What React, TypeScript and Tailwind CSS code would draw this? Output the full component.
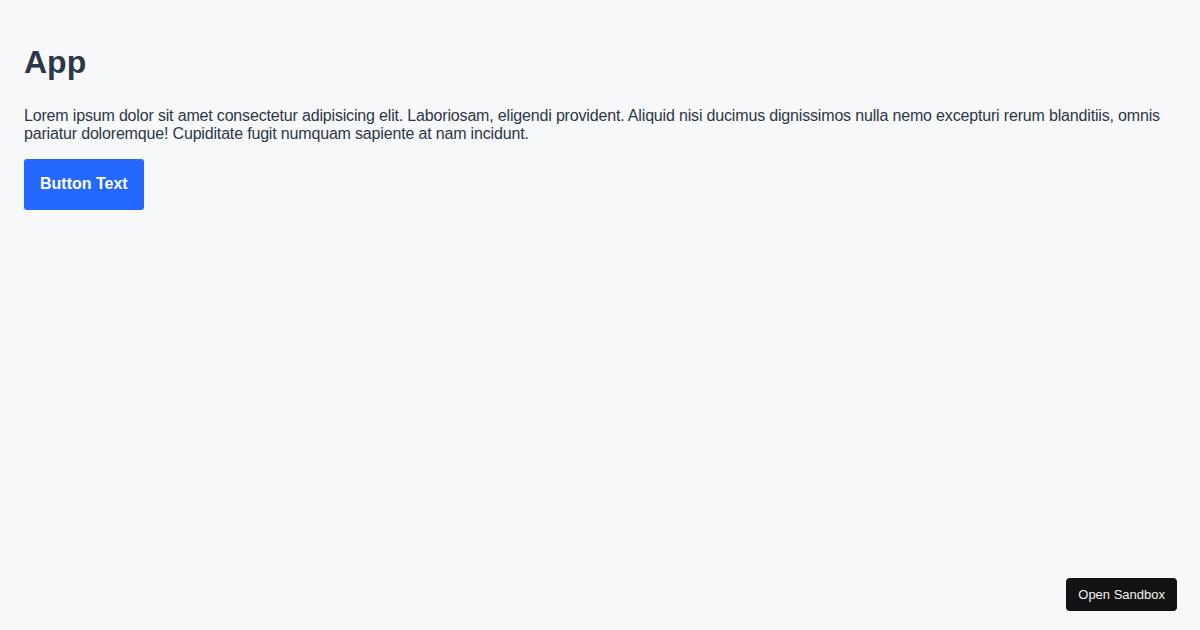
export default function App() {
  return (
    <div className="relative min-h-[630px] bg-[#f7f8fa] font-['Liberation_Sans',Arial,sans-serif] text-[#2d3748]">
      <main className="px-6 pt-11">
        <h1 className="text-[32px] leading-[37px] font-bold">App</h1>
        <p className="mt-[26px] text-base leading-[18px] tracking-[-0.17px]">
          Lorem ipsum dolor sit amet consectetur adipisicing elit. Laboriosam, eligendi provident. Aliquid nisi ducimus
          dignissimos nulla nemo excepturi rerum blanditiis, omnis pariatur doloremque! Cupiditate fugit numquam sapiente
          at nam incidunt.
        </p>
        <button className="mt-4 h-[51px] rounded-[3px] bg-[#2468ff] px-4 text-base leading-[18.4px] font-bold text-white">
          Button Text
        </button>
      </main>

      {/* sandbox overlay */}
      <button className="absolute right-[23px] bottom-[19px] h-[33px] rounded-[4px] bg-[#131313] px-3 text-[13px] text-[#f2f2f2]">
        Open Sandbox
      </button>
    </div>
  );
}
